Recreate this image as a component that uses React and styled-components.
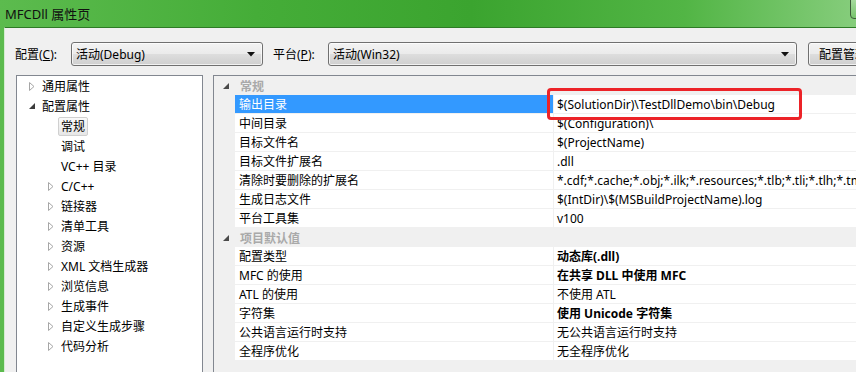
import React from 'react'
import styled, { createGlobalStyle } from 'styled-components'

const GlobalStyle = createGlobalStyle`
  html, body {
    margin: 0;
    padding: 0;
    background: #f0f0f0;
  }
  body {
    font-family: 'Noto Sans', 'Noto Sans CJK SC', sans-serif;
    font-size: 12px;
    color: #000;
  }
`

const Window = styled.div`
  width: 856px;
  height: 372px;
  overflow: hidden;
  display: flex;
  flex-direction: column;
  background: linear-gradient(90deg, #5cbb4e 0%, #45ad38 30%, #3ba42f 55%, #52b545 80%, #86cd7c 100%);
`

const TitleBar = styled.div`
  position: relative;
  height: 27px;
  flex: none;
  display: flex;
  align-items: center;
  padding-left: 5px;
  font-size: 13px;
  color: #111;
`

const CaptionButton = styled.div`
  position: absolute;
  right: -10px;
  top: -2px;
  width: 14px;
  height: 19px;
  border: 1px solid #3c5a38;
  border-radius: 0 0 0 4px;
  background: linear-gradient(#a8dca0, #78c46c);
`

const Client = styled.div`
  flex: 1;
  min-height: 0;
  margin-left: 4px;
  border-top: 1px solid #2e7b26;
  border-left: 1px solid #d4ecd0;
  background: #f0f0f0;
  display: flex;
  flex-direction: column;
  padding: 14px 0 0 10px;
`

const Toolbar = styled.div`
  display: flex;
  align-items: center;
  height: 24px;
  flex: none;
`

const Label = styled.span`
  width: ${p => p.$w}px;
  flex: none;
  white-space: nowrap;
`

const Combo = styled.div`
  width: ${p => p.$w}px;
  height: 24px;
  box-sizing: border-box;
  flex: none;
  border: 1px solid #707070;
  border-radius: 3px;
  background: linear-gradient(#f3f3f3 0%, #ebebeb 48%, #dddddd 52%, #cfcfcf 100%);
  display: flex;
  align-items: center;
  padding: 0 7px 0 4px;
  margin-right: ${p => p.$mr || 0}px;
  box-shadow: inset 0 0 0 1px rgba(255, 255, 255, 0.7);
`

const ComboText = styled.span`
  flex: 1;
  white-space: nowrap;
`

const Button = styled.div`
  height: 24px;
  box-sizing: border-box;
  flex: none;
  border: 1px solid #707070;
  border-radius: 3px;
  background: linear-gradient(#f3f3f3 0%, #ebebeb 48%, #dddddd 52%, #cfcfcf 100%);
  box-shadow: inset 0 0 0 1px rgba(255, 255, 255, 0.7);
  display: flex;
  align-items: center;
  padding: 0 10px;
  white-space: nowrap;
`

const Panels = styled.div`
  flex: 1;
  min-height: 0;
  display: flex;
  gap: 10px;
  margin-top: 9px;
  padding-left: 1px;
`

const Tree = styled.div`
  width: 187px;
  box-sizing: border-box;
  flex: none;
  background: #fff;
  border: 1px solid #828790;
  border-bottom: none;
`

const TreeRow = styled.div`
  height: 20px;
  display: flex;
  align-items: center;
  padding-left: ${p => 12 + p.$level * 19}px;
  white-space: nowrap;
`

const Toggle = styled.span`
  width: 13px;
  flex: none;
  display: flex;
  align-items: center;
`

const TreeLabel = styled.span`
  line-height: 17px;
  padding: 0 2px;
  margin-left: -3px;
  border: 1px solid ${p => (p.$selected ? '#d0d0d0' : 'transparent')};
  border-radius: 2px;
  background: ${p => (p.$selected ? 'linear-gradient(#fafafa, #e6e6e6)' : 'transparent')};
`

const Grid = styled.div`
  position: relative;
  flex: 1;
  min-width: 0;
  border-left: 1px solid #828790;
  border-top: 1px solid #828790;
  background: #f0f0f0;
  overflow: hidden;
`

const CategoryRow = styled.div`
  height: 19px;
  box-sizing: border-box;
  padding-top: 1px;
  display: flex;
  align-items: center;
  padding-left: 9px;
  font-weight: bold;
  color: #a9a9a9;
  white-space: nowrap;
`

const CategoryTitle = styled.span`
  margin-left: 4px;
`

const Row = styled.div`
  margin-left: 21px;
  height: 19px;
  box-sizing: border-box;
  border-bottom: 1px solid #f0f0f0;
  display: grid;
  grid-template-columns: 318px 1px 1fr;
  background: #fff;
  white-space: nowrap;
`

const NameCell = styled.div`
  padding: 2px 0 0 4px;
  line-height: 16px;
  background: ${p => (p.$selected ? '#3399ff' : '#fff')};
  color: ${p => (p.$selected ? '#fff' : '#000')};
`

const ColumnLine = styled.div`
  background: #f0f0f0;
`

const ValueCell = styled.div`
  padding: 2px 0 0 3px;
  line-height: 16px;
  overflow: hidden;
  font-weight: ${p => (p.$bold ? 'bold' : 'normal')};
`

const Highlight = styled.div`
  position: absolute;
  left: 333px;
  top: 12px;
  width: 255px;
  height: 32px;
  box-sizing: border-box;
  border: 3px solid #ec2328;
  border-radius: 4px;
  pointer-events: none;
`

const Arrow = () => (
  <svg width="8" height="5" viewBox="0 0 8 5">
    <path d="M0 0H8L4 4.5Z" fill="#111" />
  </svg>
)

const Collapsed = () => (
  <svg width="6" height="9" viewBox="0 0 6 9">
    <path d="M0.5 0.5L5 4.5L0.5 8.5Z" fill="#fff" stroke="#a6a6a6" />
  </svg>
)

const Expanded = ({ color = '#3c3c3c' }) => (
  <svg width="6" height="6" viewBox="0 0 6 6">
    <path d="M6 0V6H0Z" fill={color} />
  </svg>
)

const tree = [
  { label: '通用属性', level: 0, toggle: 'closed' },
  { label: '配置属性', level: 0, toggle: 'open' },
  { label: '常规', level: 1, selected: true },
  { label: '调试', level: 1 },
  { label: 'VC++ 目录', level: 1 },
  { label: 'C/C++', level: 1, toggle: 'closed' },
  { label: '链接器', level: 1, toggle: 'closed' },
  { label: '清单工具', level: 1, toggle: 'closed' },
  { label: '资源', level: 1, toggle: 'closed' },
  { label: 'XML 文档生成器', level: 1, toggle: 'closed' },
  { label: '浏览信息', level: 1, toggle: 'closed' },
  { label: '生成事件', level: 1, toggle: 'closed' },
  { label: '自定义生成步骤', level: 1, toggle: 'closed' },
  { label: '代码分析', level: 1, toggle: 'closed' },
]

const sections = [
  {
    title: '常规',
    rows: [
      ['输出目录', '$(SolutionDir)\\TestDllDemo\\bin\\Debug', false, true],
      ['中间目录', '$(Configuration)\\'],
      ['目标文件名', '$(ProjectName)'],
      ['目标文件扩展名', '.dll'],
      ['清除时要删除的扩展名', '*.cdf;*.cache;*.obj;*.ilk;*.resources;*.tlb;*.tli;*.tlh;*.tmp;*.rsp;*.pgc;*.pgd;*.meta'],
      ['生成日志文件', '$(IntDir)\\$(MSBuildProjectName).log'],
      ['平台工具集', 'v100'],
    ],
  },
  {
    title: '项目默认值',
    rows: [
      ['配置类型', '动态库(.dll)', true],
      ['MFC 的使用', '在共享 DLL 中使用 MFC', true],
      ['ATL 的使用', '不使用 ATL'],
      ['字符集', '使用 Unicode 字符集', true],
      ['公共语言运行时支持', '无公共语言运行时支持'],
      ['全程序优化', '无全程序优化'],
    ],
  },
]

export default function App() {
  return (
    <>
      <GlobalStyle />
      <Window>
        <TitleBar>
          MFCDll 属性页
          <CaptionButton />
        </TitleBar>
        <Client>
          <Toolbar>
            <Label $w={56}>配置(<u>C</u>):</Label>
            <Combo $w={192} $mr={10}>
              <ComboText>活动(Debug)</ComboText>
              <Arrow />
            </Combo>
            <Label $w={55}>平台(<u>P</u>):</Label>
            <Combo $w={469} $mr={11}>
              <ComboText>活动(Win32)</ComboText>
              <Arrow />
            </Combo>
            <Button>配置管理器(O)...</Button>
          </Toolbar>
          <Panels>
            <Tree>
              {tree.map(item => (
                <TreeRow key={item.label} $level={item.level}>
                  <Toggle>
                    {item.toggle === 'closed' && <Collapsed />}
                    {item.toggle === 'open' && <Expanded />}
                  </Toggle>
                  <TreeLabel $selected={item.selected}>{item.label}</TreeLabel>
                </TreeRow>
              ))}
            </Tree>
            <Grid>
              {sections.map(section => (
                <React.Fragment key={section.title}>
                  <CategoryRow>
                    <Toggle>
                      <Expanded color="#4a4a4a" />
                    </Toggle>
                    <CategoryTitle>{section.title}</CategoryTitle>
                  </CategoryRow>
                  {section.rows.map(([name, value, bold, selected]) => (
                    <Row key={name}>
                      <NameCell $selected={selected}>{name}</NameCell>
                      <ColumnLine />
                      <ValueCell $bold={bold}>{value}</ValueCell>
                    </Row>
                  ))}
                </React.Fragment>
              ))}
              <Highlight />
            </Grid>
          </Panels>
        </Client>
      </Window>
    </>
  )
}
